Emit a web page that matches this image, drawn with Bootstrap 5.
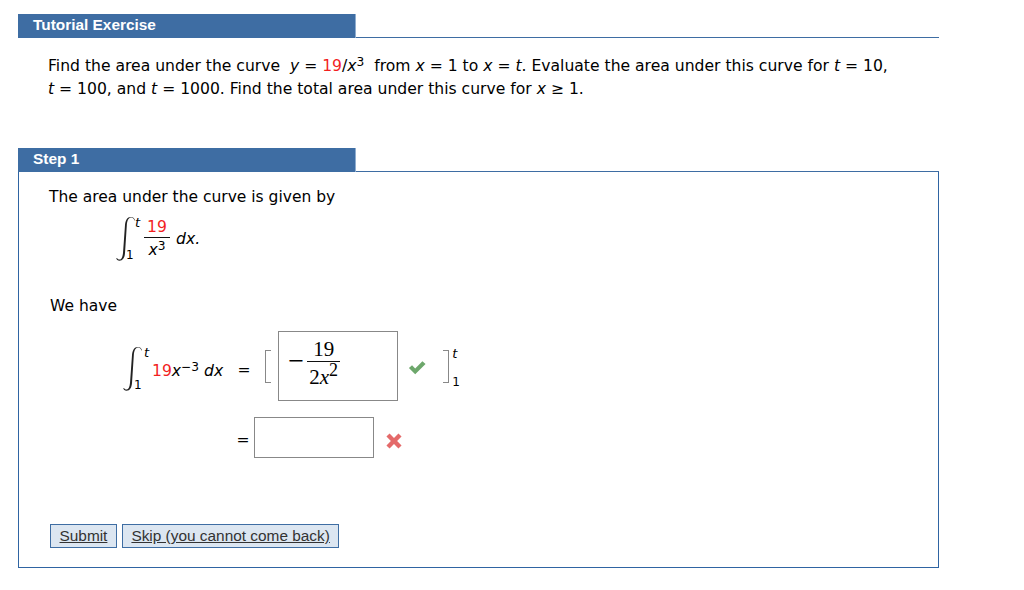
<!DOCTYPE html>
<html lang="en">
<head>
<meta charset="utf-8">
<title>Tutorial Exercise</title>
<link href="https://cdn.jsdelivr.net/npm/bootstrap@5.3.0/dist/css/bootstrap.min.css" rel="stylesheet">
<style>
html,body{background:#fff;overflow:hidden}
body{font-family:"DejaVu Sans",Verdana,sans-serif;font-size:15.6px;color:#000;line-height:23px}
.page{width:921px;margin-left:18px;padding-top:14px}
.tabhead{height:24px;border-bottom:1px solid #3e6da3;display:flex}
.tabtitle{width:338px;height:24px;background:#3e6da3;color:#fff;font:700 15.4px/22px "Liberation Sans",Arial,sans-serif;padding-left:15px;border-right:1px solid #8fadcf}
.prob{padding:17px 0 0 30px;height:110px}
.prob p{margin:0;white-space:nowrap}
.em{font-style:italic}
.red{color:#f21f1f}
.stepbox{border:1px solid #2f64a2;border-top:0;height:396px;padding:14px 0 0 30px}
.stepbox p{margin:0;font-size:15.5px}
.sup{font-size:12.2px;position:relative;top:-5px;line-height:0}
.intsvg{display:block;flex:none}
.limits{display:flex;flex-direction:column;justify-content:space-between;font-size:12px;line-height:12px;flex:none}
.limits .em{align-self:flex-end;font-size:13px}
.int1{height:44px;margin:8px 0 0 67px}
.int1 .intsvg{margin-right:-9px}
.int1 .limits{height:44px;width:14px}
.frac{display:flex;flex-direction:column;align-items:center;width:26px;margin-left:4px;margin-top:-1px}
.frac>span:first-child{border-bottom:1px solid #111;width:100%;text-align:center;line-height:20px}
.frac>span:last-child{line-height:20px;padding-top:2px}
.dxdot{margin-left:6px}
.wehave{margin-top:34px!important;padding-left:1px}
.int2{margin:13px 0 0 74px;height:70px}
.int2 .intsvg{margin:5px -8px 0 0}
.int2 .limits{height:44px;width:15px;margin-top:5px}
.inttext{margin:10px 0 0 3px;white-space:nowrap}
.eq{width:16px;text-align:center;flex:none}
.eq1{margin:8px 0 0 13px}
.brk{width:6px;height:33px;border:1px solid #888;flex:none}
.brkl{border-right:0;margin-left:13px}
.brkr{border-left:0;margin-left:17px}
.ans1{width:120px;height:70px;border:1px solid #888;margin-left:7px;font-family:"Liberation Serif","Times New Roman",serif;font-size:21px;padding-left:9px;flex:none}
.minus{font-size:28px;width:19px;line-height:1;margin-top:-11px}
.mfrac{display:flex;flex-direction:column;align-items:center;width:33px;margin-top:-3px}
.mfrac>span:first-child{border-bottom:1px solid #111;width:100%;text-align:center;line-height:22px;padding-bottom:1px}
.mfrac>span:last-child{line-height:30px}
.mfrac sup{font-size:18px;top:-8px;line-height:0;position:relative;vertical-align:baseline}
.chk{margin-left:10px;margin-top:3px;flex:none}
.int2 .rlim{margin-left:3px;width:8px;height:40px;margin-top:3px}
.int2 .rlim .em{align-self:flex-start}
.row2{margin:16px 0 0 186px;height:41px}
.eq2{margin-top:6px}
.ans2{width:120px;height:41px;border:1px solid #888;background:#fff;margin-left:3px}
.xmark{margin-left:12px;margin-top:6px;flex:none}
.btns{margin:66px 0 0 1px;gap:5px}
.subbtn{font:15.4px/20px "Liberation Sans",Arial,sans-serif;color:#333;background:#dce6f1;border:1px solid #3e6da3;border-radius:0;padding:0 8.500px;height:24px;text-decoration:underline}
</style>
</head>
<body>
<main class="page">
  <div class="tabhead"><div class="tabtitle">Tutorial Exercise</div></div>
  <div class="prob">
    <p>Find the area under the curve&nbsp; <span class="em">y</span> = <span class="red">19</span>/<span class="em">x</span><span class="sup">3</span>&nbsp; from <span class="em">x</span> = 1 to <span class="em">x</span> = <span class="em">t</span>. Evaluate the area under this curve for <span class="em">t</span> = 10,</p>
    <p><span class="em">t</span> = 100, and <span class="em">t</span> = 1000. Find the total area under this curve for <span class="em">x</span> ≥ 1.</p>
  </div>

  <div class="tabhead"><div class="tabtitle">Step 1</div></div>
  <section class="stepbox">
    <p>The area under the curve is given by</p>

    <div class="d-flex align-items-center int1">
      <svg class="intsvg" width="19" height="44" viewBox="0 0 19 44" aria-hidden="true"><path d="M19 3.200C18 1.200 17 0 15 0 11 0 9.600 3.500 9 8L7 36C6.600 40 5.500 42.500 3.800 42.600 2.800 42.700 1.700 42.200 1 41L.3 41.300C.5 42.800 1.800 43.700 3.500 43.700 7 43.700 8.700 40.500 9 36L10.800 8.500C11.100 4 12.300 .8 15 .6 16.500 .5 17.800 1.500 18.500 3.500Z" fill="#222"/></svg>
      <div class="limits"><span class="em">t</span><span>1</span></div>
      <div class="frac"><span class="red">19</span><span class="em">x<span class="sup fst-normal">3</span></span></div>
      <span class="em dxdot">dx.</span>
    </div>

    <p class="wehave">We have</p>

    <div class="d-flex align-items-center int2">
      <svg class="intsvg" width="19" height="44" viewBox="0 0 19 44" aria-hidden="true"><path d="M19 3.200C18 1.200 17 0 15 0 11 0 9.600 3.500 9 8L7 36C6.600 40 5.500 42.500 3.800 42.600 2.800 42.700 1.700 42.200 1 41L.3 41.300C.5 42.800 1.800 43.700 3.500 43.700 7 43.700 8.700 40.500 9 36L10.800 8.500C11.100 4 12.300 .8 15 .6 16.500 .5 17.800 1.500 18.500 3.500Z" fill="#222"/></svg>
      <div class="limits"><span class="em">t</span><span>1</span></div>
      <span class="inttext"><span class="red">19</span><span class="em">x</span><span class="sup">−3</span> <span class="em">dx</span></span>
      <span class="eq eq1">=</span>
      <span class="brk brkl"></span>
      <div class="ans1 d-flex align-items-center">
        <span class="minus">−</span>
        <div class="mfrac"><span>19</span><span>2<span class="em">x</span><sup>2</sup></span></div>
      </div>
      <svg class="chk" width="18" height="15" viewBox="0 0 20 16" aria-hidden="true"><path d="M1 8.500 4.500 5.500 8 9 16 1 19.500 4 8 15.500Z" fill="#6da76b"/></svg>
      <span class="brk brkr"></span>
      <div class="limits rlim"><span class="em">t</span><span>1</span></div>
    </div>

    <div class="d-flex align-items-center row2">
      <span class="eq eq2">=</span>
      <input class="ans2" type="text" aria-label="Answer">
      <svg class="xmark" width="16" height="16" viewBox="0 0 18 18" aria-hidden="true"><path d="M.5 4 4 .5 9 5.500 14 .5 17.500 4 12.500 9 17.500 14 14 17.500 9 12.500 4 17.500.5 14 5.500 9Z" fill="#e46a6a"/></svg>
    </div>

    <div class="d-flex btns">
      <button class="btn subbtn" type="button">Submit</button>
      <button class="btn subbtn" type="button">Skip (you cannot come back)</button>
    </div>
  </section>
</main>
<script src="https://cdn.jsdelivr.net/npm/bootstrap@5.3.0/dist/js/bootstrap.bundle.min.js"></script>
</body>
</html>
